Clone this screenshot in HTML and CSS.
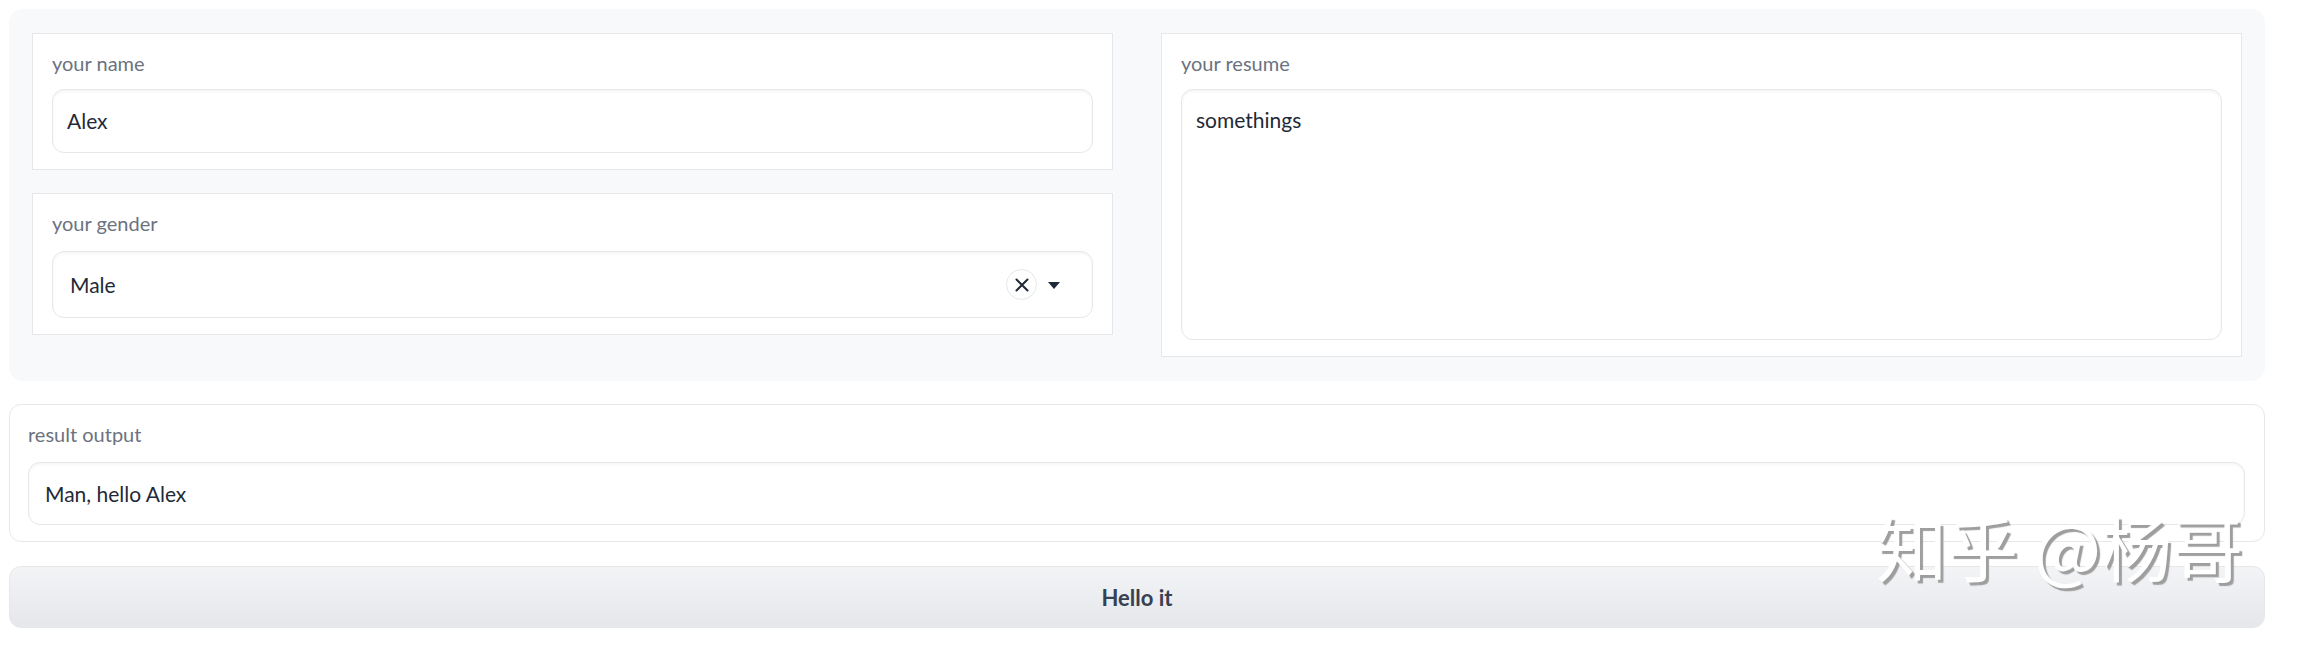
FILE: index.html
```html
<!DOCTYPE html>
<html lang="en">
<head>
  <meta charset="UTF-8">
  <title>Hello it</title>
  <link rel="stylesheet" href="styles.css">
</head>
<body>
  <div class="app">
    <!-- Inputs panel -->
    <div class="panel">
      <div class="column">
        <div class="block">
          <div class="label">your name</div>
          <div class="field name-field">Alex</div>
        </div>
        <div class="block">
          <div class="label gender-label">your gender</div>
          <div class="field select-field">
            <span class="select-value">Male</span>
            <div class="select-icons">
              <span class="clear-btn">
                <svg width="14" height="14" viewBox="0 0 14 14"><path d="M1.5 1.5 L12.5 12.5 M12.5 1.5 L1.5 12.5" stroke="#1f2937" stroke-width="2" stroke-linecap="round"/></svg>
              </span>
              <svg class="caret" width="12" height="7" viewBox="0 0 12 7"><path d="M0 0 L12 0 L6 7 Z" fill="#1f2937"/></svg>
            </div>
          </div>
        </div>
      </div>
      <div class="column">
        <div class="block resume-block">
          <div class="label">your resume</div>
          <div class="field textarea-field">somethings</div>
        </div>
      </div>
    </div>

    <!-- Output -->
    <div class="block output-block">
      <div class="label output-label">result output</div>
      <div class="field output-field">Man, hello Alex</div>
    </div>

    <button class="submit-btn">Hello it</button>
  </div>

  <div class="watermark">知乎 @杨哥</div>
</body>
</html>
```

FILE: styles.css
```css
body {
  margin: 0;
  background-color: #ffffff;
  font-family: Lato, "Noto Sans", sans-serif;
  color: #1f2937;
}

.app {
  width: 2256px;
  margin: 9px;
  display: flex;
  flex-direction: column;
  gap: 23px;
}

/* Gray panel holding the two input columns */
.panel {
  display: flex;
  gap: 48px;
  padding: 24px 23px 24px 23px;
  background-color: #f8f9fa;
  border-radius: 14px;
}

.column {
  flex: 1;
  display: flex;
  flex-direction: column;
  align-items: stretch;
  gap: 23px;
}

.block {
  background-color: #ffffff;
  border: 1px solid #e5e7eb;
  padding: 15px 19px 16px 19px;
}

.label {
  font-size: 20px;
  line-height: 28px;
  color: #6b7280;
  margin-bottom: 12px;
}

.gender-label {
  margin-bottom: 14px;
}

.field {
  box-sizing: border-box;
  border: 1px solid #e5e7eb;
  border-radius: 12px;
  background-color: #ffffff;
  box-shadow: inset 0 2px 3px rgba(0, 0, 0, 0.04);
  font-size: 21px;
  color: #1f2937;
}

.name-field {
  height: 64px;
  line-height: 62px;
  padding: 0 14px;
}

.select-field {
  height: 67px;
  padding: 0 32px 0 17px;
  display: flex;
  align-items: center;
  justify-content: space-between;
}

.select-icons {
  display: flex;
  align-items: center;
  gap: 11px;
}

.clear-btn {
  width: 29px;
  height: 29px;
  border: 1px solid #e5e7eb;
  border-radius: 50%;
  display: flex;
  align-items: center;
  justify-content: center;
}

.caret {
  display: block;
  margin-top: 2px;
}

.textarea-field {
  height: 251px;
  padding: 16px 14px;
  line-height: 28px;
}

/* Output block */
.output-block {
  border-radius: 12px;
  padding: 15px 19px 16px 18px;
}

.output-label {
  margin-bottom: 14px;
}

.output-field {
  height: 63px;
  line-height: 61px;
  padding: 0 16px;
}

.submit-btn {
  height: 62px;
  width: 100%;
  margin-top: 1px;
  border: 1px solid #e5e7eb;
  border-radius: 12px;
  background: linear-gradient(to bottom, #f3f4f6, #e5e7eb);
  font-family: Lato, "Noto Sans", sans-serif;
  font-size: 22px;
  font-weight: bold;
  color: #374151;
  cursor: pointer;
}

.watermark {
  position: absolute;
  left: 1876px;
  top: 494px;
  font-family: "Noto Sans CJK SC", sans-serif;
  font-size: 71px;
  font-weight: 400;
  color: #ffffff;
  text-shadow: 3px 3px 1px #9e9e9e;
  white-space: nowrap;
}
```
